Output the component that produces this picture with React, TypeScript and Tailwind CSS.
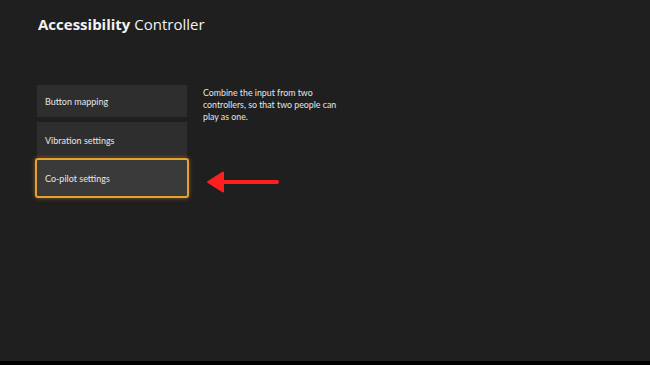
import React from "react";

export default function App() {
  return (
    <div
      className="w-[650px] h-[365px] bg-black flex flex-col overflow-hidden"
      style={{ fontFamily: '"Open Sans", "Noto Sans", sans-serif' }}
    >
      <div className="h-[361px] bg-[#1f1f1f] flex flex-col">
        <div className="pl-[38px] pt-[13px] text-[15px] leading-[22px] text-[#f2f2f2]">
          <span className="font-bold">Accessibility</span>{" "}
          <span className="font-normal">Controller</span>
        </div>
        <div className="flex mt-[50px]" style={{ fontFamily: 'Lato, "Open Sans", sans-serif' }}>
          <div className="w-[154px] ml-[35px] flex flex-col">
            <div className="mx-[2px] h-[32px] bg-[#2e2e2e] flex items-center pl-[8px] pt-[2px] text-[9px] text-[#e6e6e6]">
              Button mapping
            </div>
            <div className="mx-[2px] mt-[5px] h-[35px] bg-[#2e2e2e] flex items-center pl-[8px] pt-[2px] text-[9px] text-[#e6e6e6]">
              Vibration settings
            </div>
            <div className="mt-[1px] h-[40px] bg-[#3a3a3a] border-2 border-[#e8a030] rounded-[3px] shadow-[0_0_4px_rgba(232,160,48,0.5)] flex items-center pl-[8px] pt-[2px] text-[9px] text-[#e6e6e6]">
              Co-pilot settings
            </div>
          </div>
          <div className="ml-[14px] flex flex-col">
            <div className="w-[150px] text-[8.8px] leading-[12px] text-[#e6e6e6] pt-[2px]">
              Combine the input from two controllers, so that two people can play as one.
            </div>
            <svg width="80" height="30" viewBox="0 0 80 30" className="mt-[46px] ml-[4px]">
              <line x1="16" y1="13" x2="70" y2="13" stroke="#ff1f1f" strokeWidth="4" strokeLinecap="round" />
              <polygon points="1,13 16,3.5 16,22.5" fill="#ff1f1f" stroke="#ff1f1f" strokeWidth="2" strokeLinejoin="round" />
            </svg>
          </div>
        </div>
      </div>
    </div>
  );
}
